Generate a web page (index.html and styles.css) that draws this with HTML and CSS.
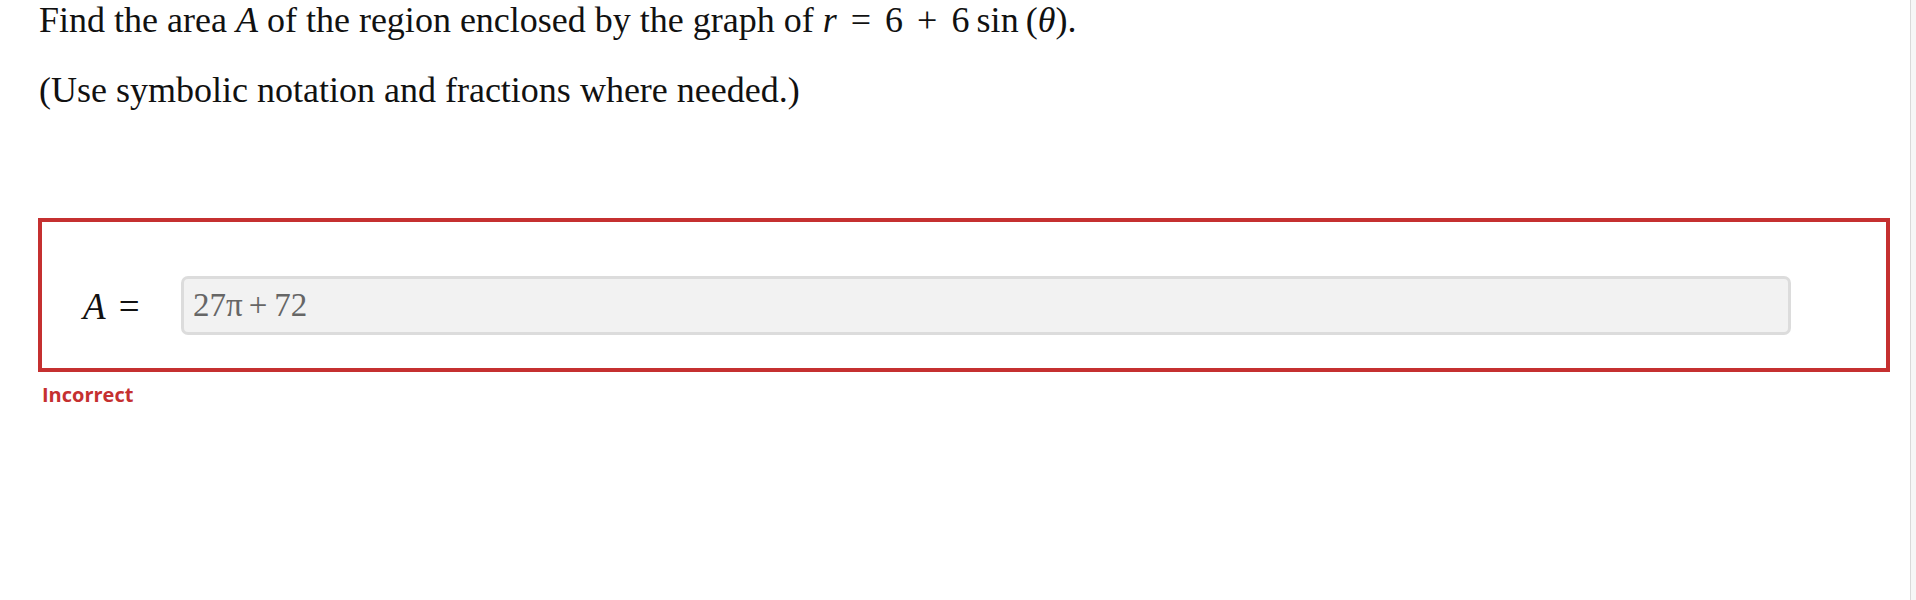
FILE: index.html
```
<!doctype html>
<html>
<head lang="en">
	<meta charset="UTF-8">
	<meta name="viewport" content="width=device-width, initial-scale=1">
	<title>Area of a polar region</title>
	<link rel="stylesheet" href="styles.css">
</head>
<body>

<div class="qz-page">
	<div class="qz-main">
		<p class="qz-text qz-text--first">Find the area <i class="qz-var">A</i> of the region enclosed by the graph of <span class="qz-math"><i class="qz-var">r</i><span class="qz-op">=</span>6<span class="qz-op">+</span>6&#8201;sin&#8201;(<i class="qz-var">&theta;</i>).</span></p>
		<p class="qz-text qz-text--second">(Use symbolic notation and fractions where needed.)</p>

		<div class="qz-answer is-incorrect">
			<div class="qz-answer__label"><i class="qz-var">A</i> <span class="qz-op qz-op--label">=</span></div>
			<div class="qz-answer__field">27&pi;<span class="qz-op qz-op--field">+</span>72</div>
		</div>
		<div class="qz-feedback">Incorrect</div>
	</div>
	<div class="qz-gutter"></div>
</div>

</body>
</html>
```

FILE: styles.css
```
* {
	margin: 0;
	padding: 0;
	box-sizing: border-box;
}
body {
	color: #111;
	background-color: #fff;
	font-family: 'Liberation Serif', 'Times New Roman', serif;
	font-size: 36px;
}
.qz-page {
	display: flex;
	min-height: 600px;
}
.qz-main {
	flex: 1;
	padding-right: 20px;
}
.qz-gutter {
	width: 6px;
	border-left: 1px solid #d9d9d9;
	background-color: #f6f6f6;
}
.qz-text {
	font-size: 36px;
	line-height: 40px;
	padding-left: 39px;
}
.qz-text--second {
	margin-top: 30px;
}
.qz-var {
	font-style: italic;
}
.qz-op {
	padding: 0 14px;
}
.qz-answer {
	display: flex;
	align-items: center;
	margin-top: 108px;
	margin-left: 38px;
	height: 154px;
	padding: 50px 95px 29px 41px;
	border: 4px solid #c53030;
}
.qz-answer__label {
	width: 98px;
	flex-shrink: 0;
	font-size: 37px;
	line-height: 40px;
	margin-top: 2px;
}
.qz-op--label {
	padding: 0 0 0 4px;
}
.qz-answer__field {
	flex: 1;
	height: 59px;
	padding-left: 9px;
	border: 3px solid #dcdcdc;
	border-radius: 7px;
	background-color: #f2f2f2;
	color: #666;
	font-size: 33px;
	line-height: 53px;
}
.qz-op--field {
	padding: 0 7px 0 6px;
}
.qz-feedback {
	margin-top: 11px;
	margin-left: 42px;
	color: #c53030;
	font-family: 'Open Sans', sans-serif;
	font-size: 20px;
	font-weight: bold;
	line-height: 24px;
}
```
